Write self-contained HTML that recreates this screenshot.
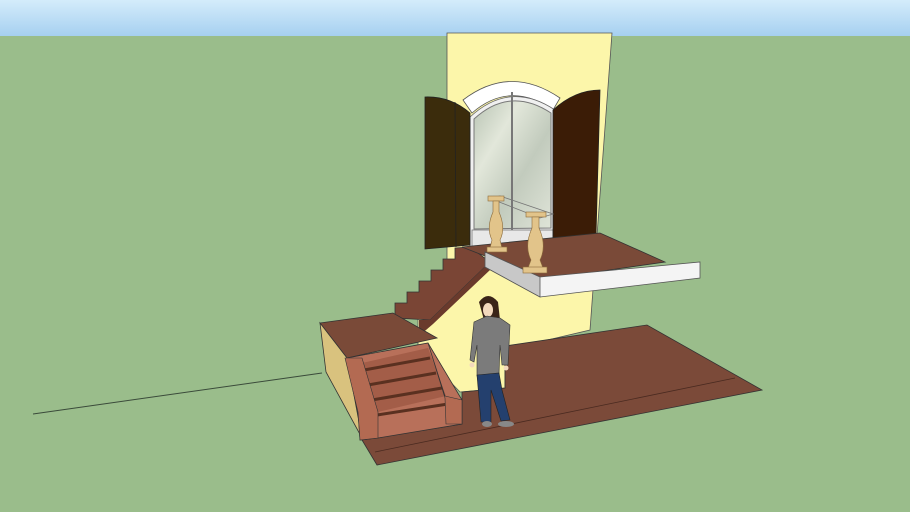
<!DOCTYPE html>
<html><head><style>
html,body{margin:0;padding:0;width:910px;height:512px;overflow:hidden;background:#9abd8b}
svg{display:block}
</style></head><body>
<svg width="910" height="512" viewBox="0 0 910 512" xmlns="http://www.w3.org/2000/svg">
<defs>
<linearGradient id="sky" x1="0" y1="0" x2="0" y2="1"><stop offset="0" stop-color="#d4ecfb"/><stop offset="1" stop-color="#a6d0f0"/></linearGradient>
<linearGradient id="glass" x1="0" y1="0" x2="1" y2="1"><stop offset="0" stop-color="#b9c4b4"/><stop offset="0.3" stop-color="#e2e7da"/><stop offset="0.6" stop-color="#c2cbbd"/><stop offset="1" stop-color="#dfe4d8"/></linearGradient>
</defs>
<rect x="0" y="0" width="910" height="36" fill="url(#sky)"/>
<rect x="0" y="36" width="910" height="476" fill="#9abd8b"/>
<line x1="33" y1="414" x2="322" y2="373" stroke="#3a4a3a" stroke-width="1"/>
<polygon points="447,33 612,33 590,330 505,350 505,388 460,392 418,348 418,318 447,290" fill="#fcf6aa" stroke="#555" stroke-width="0.8"/>
<polygon points="505,346 647,325 762,390 377,465 362,440 462,424 462,392 505,388" fill="#7b4a39" stroke="#333" stroke-width="0.8"/>
<line x1="375" y1="452" x2="735" y2="378" stroke="#4a2a20" stroke-width="0.8"/>
<polygon points="395,318 395,303 407,303 407,292 419,292 419,281 431,281 431,270 443,270 443,259 455,259 455,248 470,247 490,262 430,320" fill="#7a4535" stroke="#333" stroke-width="0.8"/>
<polygon points="419,320 430,320 490,262 490,270 433,324 419,336" fill="#6a3a2c"/>
<polygon points="320,323 393,313 437,338 347,358" fill="#7a4a38" stroke="#333" stroke-width="0.8"/>
<polygon points="320,323 347,358 362,438 326,372" fill="#d9c27e" stroke="#333" stroke-width="0.8"/>
<polygon points="347,358 428,343 462,400 462,424 378,438 360,440 358,412" fill="#b8705a" stroke="#333" stroke-width="0.8"/>
<polygon points="362,363 428,348 446,396 378,412" fill="#a35d48"/>
<g stroke="#5a3020" stroke-width="3">
<line x1="364" y1="370" x2="430" y2="358"/>
<line x1="368" y1="385" x2="436" y2="373"/>
<line x1="372" y1="400" x2="442" y2="388"/>
<line x1="377" y1="415" x2="448" y2="404"/>
</g>
<polygon points="345,358 362,358 378,412 378,438 360,440 358,412" fill="#b36a52" stroke="#333" stroke-width="0.6"/>
<polygon points="428,343 445,396 462,400 462,424 446,424 445,398" fill="#b36a52" stroke="#333" stroke-width="0.6"/>
<path d="M463,100 Q510,64 560,98 L553,110 Q510,80 472,113 Z" fill="#fff" stroke="#555" stroke-width="0.8"/>
<path d="M470,117 Q510,80 555,110 L555,248 L470,248 Z" fill="#f0f0f0" stroke="#666" stroke-width="0.8"/>
<path d="M474,119 Q510,86 551,113 L551,228 L474,229 Z" fill="url(#glass)" stroke="#777" stroke-width="1"/>
<line x1="512" y1="92" x2="512" y2="246" stroke="#777" stroke-width="2"/>
<rect x="472" y="230" width="81" height="17" fill="#e8e8e8" stroke="#777" stroke-width="0.8"/>
<path d="M425,97 Q450,96 470,113 L470,245 L425,249 Z" fill="#3b2c0c" stroke="#222" stroke-width="0.8"/>
<line x1="455" y1="102" x2="456" y2="247" stroke="#222" stroke-width="0.8"/>
<path d="M553,110 Q575,90 600,90 L596,235 L553,238 Z" fill="#3b1c06" stroke="#222" stroke-width="0.8"/>
<polygon points="462,247 600,233 665,262 540,280 485,256" fill="#7a4a38" stroke="#333" stroke-width="0.8"/>
<polygon points="485,252 540,277 700,262 700,278 540,297 485,267" fill="#f4f4f4" stroke="#555" stroke-width="0.8"/>
<polygon points="485,252 540,277 540,297 485,267" fill="#c8c8c8" stroke="#555" stroke-width="0.8"/>
<polygon points="489,198 500,196 553,214 540,218" fill="none" stroke="#777" stroke-width="0.8"/>
<g fill="#e2c48a" stroke="#8a6a3a" stroke-width="0.6">
<rect x="488" y="196" width="16" height="5"/>
<path d="M493,201 L499,201 L499,212 Q506,228 500,240 L502,248 L490,248 L492,240 Q486,228 493,212 Z"/>
<rect x="487" y="247" width="20" height="5"/>
<rect x="526" y="212" width="20" height="5"/>
<path d="M532,217 L539,217 L539,228 Q547,246 540,260 L543,268 L528,268 L531,260 Q524,246 532,228 Z"/>
<rect x="523" y="267" width="24" height="6"/>
</g>
<path d="M479,302 Q488,290 498,302 L500,320 L484,320 Z" fill="#3a2418"/>
<ellipse cx="488" cy="310" rx="5" ry="7" fill="#f3d9bd"/>
<path d="M474,322 L487,316 L500,318 L510,325 L508,365 L502,365 L500,345 L499,374 L477,376 L477,345 L474,362 L470,360 Z" fill="#7b7b7b" stroke="#333" stroke-width="0.6"/>
<path d="M477,375 L499,373 L502,390 L510,420 L501,421 L491,390 L491,422 L481,422 Z" fill="#24406e" stroke="#222" stroke-width="0.6"/>
<ellipse cx="487" cy="424" rx="5" ry="3" fill="#888"/>
<ellipse cx="506" cy="424" rx="8" ry="3" fill="#888"/>
<circle cx="472" cy="365" r="2.5" fill="#f3d9bd"/>
<circle cx="506" cy="368" r="2.5" fill="#f3d9bd"/>
</svg>
</body></html>
